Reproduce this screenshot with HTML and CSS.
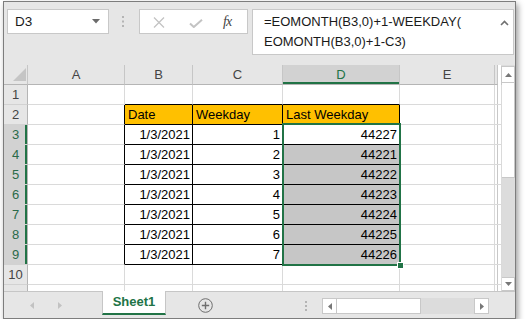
FILE: index.html
```html
<!DOCTYPE html>
<html>
<head>
<meta charset="utf-8">
<link rel="stylesheet" href="styles.css">
</head>
<body>
<div class="win">
  <div class="fbar">
    <div class="namebox">
      <span class="nb-text">D3</span>
      <svg class="nb-arrow" width="8" height="5" viewBox="0 0 8 5"><path d="M0 0H8L4 4.5Z" fill="#6b6b6b"/></svg>
    </div>
    <div class="sep">
      <svg width="3" height="11" viewBox="0 0 3 11"><rect x="0" y="0" width="2" height="2" fill="#b4b4b4"/><rect x="0" y="4.5" width="2" height="2" fill="#b4b4b4"/><rect x="0" y="9" width="2" height="2" fill="#b4b4b4"/></svg>
    </div>
    <div class="fbtns">
      <svg class="ic-x" width="12" height="11" viewBox="0 0 12 11"><path d="M1 0.5L11 10.5M11 0.5L1 10.5" stroke="#c3c3c3" stroke-width="1.3" fill="none"/></svg>
      <svg class="ic-ok" width="14" height="9" viewBox="0 0 14 9"><path d="M1 4.5L4.8 8L13 0.8" stroke="#c3c3c3" stroke-width="2" fill="none"/></svg>
      <span class="ic-fx">fx</span>
    </div>
    <div class="finput">
      <div class="ftext">=EOMONTH(B3,0)+1-WEEKDAY(<br>EOMONTH(B3,0)+1-C3)</div>
      <svg class="caret" width="9" height="6" viewBox="0 0 9 6"><path d="M1 5L4.5 1.5L8 5" stroke="#707070" stroke-width="1.6" fill="none"/></svg>
    </div>
  </div>

  <div class="main">
    <div class="sheet">
      <!-- header -->
      <div class="c h corner"><svg width="13" height="13" viewBox="0 0 13 13"><path d="M13 0V13H0Z" fill="#c5c5c5"/></svg></div>
      <div class="c h">A</div>
      <div class="c h">B</div>
      <div class="c h">C</div>
      <div class="c h hsel">D</div>
      <div class="c h">E</div>
      <div class="c h"></div>
      <!-- row 1 -->
      <div class="c rh">1</div>
      <div class="c"></div>
      <div class="c bb"></div>
      <div class="c bb"></div>
      <div class="c bb"></div>
      <div class="c"></div>
      <div class="c"></div>
      <!-- row 2 -->
      <div class="c rh">2</div>
      <div class="c br"></div>
      <div class="c tb y">Date</div>
      <div class="c tb y">Weekday</div>
      <div class="c tb y">Last Weekday</div>
      <div class="c"></div>
      <div class="c"></div>
      <!-- row 3 -->
      <div class="c rh rsel">3</div>
      <div class="c br"></div>
      <div class="c tb num">1/3/2021</div>
      <div class="c tb num">1</div>
      <div class="c tb num">44227</div>
      <div class="c"></div>
      <div class="c"></div>
      <!-- row 4 -->
      <div class="c rh rsel">4</div>
      <div class="c br"></div>
      <div class="c tb num">1/3/2021</div>
      <div class="c tb num">2</div>
      <div class="c tb num g">44221</div>
      <div class="c"></div>
      <div class="c"></div>
      <!-- row 5 -->
      <div class="c rh rsel">5</div>
      <div class="c br"></div>
      <div class="c tb num">1/3/2021</div>
      <div class="c tb num">3</div>
      <div class="c tb num g">44222</div>
      <div class="c"></div>
      <div class="c"></div>
      <!-- row 6 -->
      <div class="c rh rsel">6</div>
      <div class="c br"></div>
      <div class="c tb num">1/3/2021</div>
      <div class="c tb num">4</div>
      <div class="c tb num g">44223</div>
      <div class="c"></div>
      <div class="c"></div>
      <!-- row 7 -->
      <div class="c rh rsel">7</div>
      <div class="c br"></div>
      <div class="c tb num">1/3/2021</div>
      <div class="c tb num">5</div>
      <div class="c tb num g">44224</div>
      <div class="c"></div>
      <div class="c"></div>
      <!-- row 8 -->
      <div class="c rh rsel">8</div>
      <div class="c br"></div>
      <div class="c tb num">1/3/2021</div>
      <div class="c tb num">6</div>
      <div class="c tb num g">44225</div>
      <div class="c"></div>
      <div class="c"></div>
      <!-- row 9 -->
      <div class="c rh rsel">9</div>
      <div class="c br"></div>
      <div class="c tb num">1/3/2021</div>
      <div class="c tb num">7</div>
      <div class="c tb num g">44226</div>
      <div class="c"></div>
      <div class="c"></div>
      <!-- row 10 -->
      <div class="c rh">10</div>
      <div class="c"></div>
      <div class="c"></div>
      <div class="c"></div>
      <div class="c"></div>
      <div class="c"></div>
      <div class="c"></div>
      <!-- partial row 11 -->
      <div class="c rh last"></div>
      <div class="c last"></div>
      <div class="c last"></div>
      <div class="c last"></div>
      <div class="c last"></div>
      <div class="c last"></div>
      <div class="c last"></div>

      <div class="selection"><span class="handle"></span></div>
    </div>
    <div class="vscroll">
      <div class="sbtn up"><svg width="7" height="4" viewBox="0 0 7 4"><path d="M0 4H7L3.5 0Z" fill="#777"/></svg></div>
      <div class="vthumb"></div>
      <div class="vtrack"></div>
      <div class="sbtn down"><svg width="7" height="4" viewBox="0 0 7 4"><path d="M0 0H7L3.5 4Z" fill="#777"/></svg></div>
    </div>
  </div>

  <div class="tabs">
    <div class="nav">
      <svg class="nav-l" width="4" height="7" viewBox="0 0 4 7"><path d="M4 0V7L0 3.5Z" fill="#c2c2c2"/></svg>
      <svg class="nav-r" width="4" height="7" viewBox="0 0 4 7"><path d="M0 0V7L4 3.5Z" fill="#c2c2c2"/></svg>
    </div>
    <div class="tab">Sheet1</div>
    <div class="addsheet">
      <svg width="15" height="15" viewBox="0 0 15 15"><circle cx="7.5" cy="7.5" r="6.8" stroke="#6e6e6e" stroke-width="1" fill="none"/><path d="M7.5 3.8V11.2M3.8 7.5H11.2" stroke="#6e6e6e" stroke-width="1.4"/></svg>
    </div>
    <div class="hdots">
      <svg width="2" height="10" viewBox="0 0 2 10"><rect x="0" y="0" width="2" height="2" fill="#b4b4b4"/><rect x="0" y="4" width="2" height="2" fill="#b4b4b4"/><rect x="0" y="8" width="2" height="2" fill="#b4b4b4"/></svg>
    </div>
    <div class="hscroll">
      <div class="hbtn"><svg width="4" height="7" viewBox="0 0 4 7"><path d="M4 0V7L0 3.5Z" fill="#777"/></svg></div>
      <div class="hthumb"></div>
      <div class="htrack"></div>
      <div class="hbtn"><svg width="4" height="7" viewBox="0 0 4 7"><path d="M0 0V7L4 3.5Z" fill="#777"/></svg></div>
    </div>
  </div>
</div>
</body>
</html>
```

FILE: styles.css
```css
* { box-sizing: border-box; }

html, body {
  margin: 0;
  padding: 0;
  background: #ffffff;
}

body {
  font-family: "Liberation Sans", Arial, sans-serif;
  color: #000;
}

.win {
  margin: 1px 0 0 3px;
  width: 513px;
  height: 318px;
  border: 1px solid #7d7d7d;
  background: #e6e6e6;
  box-shadow: 2px 3px 6px rgba(0, 0, 0, 0.4);
  display: flex;
  flex-direction: column;
}

/* ---------- formula bar ---------- */
.fbar {
  height: 63px;
  display: flex;
  align-items: flex-start;
  padding-top: 7px;
}

.namebox {
  margin-left: 3px;
  width: 102px;
  height: 25px;
  background: #fff;
  border: 1px solid #c8c8c8;
  display: flex;
  align-items: center;
  justify-content: space-between;
  padding: 0 8px 0 7px;
}

.nb-text {
  font-size: 13.5px;
  color: #1a1a1a;
}

.sep {
  width: 30px;
  height: 25px;
  display: flex;
  align-items: center;
  justify-content: center;
  padding-right: 1px;
}

.fbtns {
  width: 109px;
  height: 25px;
  background: #fff;
  border: 1px solid #c8c8c8;
  display: flex;
  align-items: center;
  padding-left: 13px;
}

.ic-x { margin-top: 1px; }
.ic-ok { margin-left: 24px; margin-top: 3px; }

.ic-fx {
  margin-left: 20px;
  font-family: "Liberation Serif", "Times New Roman", serif;
  font-style: italic;
  font-size: 14px;
  color: #444;
  letter-spacing: -1px;
}

.finput {
  margin-left: 4px;
  margin-right: 1px;
  flex: 1;
  height: 46px;
  background: #fff;
  border: 1px solid #c8c8c8;
  display: flex;
  justify-content: space-between;
  padding: 2px 0 0 11px;
}

.ftext {
  font-size: 13px;
  line-height: 20px;
  color: #1a1a1a;
  white-space: nowrap;
}

.caret {
  margin: 8px 4px 0 0;
}

/* ---------- main sheet ---------- */
.main {
  height: 226px;
  display: flex;
  background: #fff;
}

.sheet {
  position: relative;
  display: grid;
  grid-template-columns: 24px 97px 68px 90px 117px 95px 3px;
  grid-template-rows: repeat(11, 20px) 6px;
  width: 494px;
  border-right: 1px solid #c8c8c8;
}

.c {
  border-right: 1px solid #dadada;
  border-bottom: 1px solid #dadada;
  font-size: 13px;
  line-height: 19px;
  padding: 0 3px;
  white-space: nowrap;
  overflow: hidden;
  color: #000;
}

.c.last { border-bottom: none; }

.h {
  background: #e6e6e6;
  text-align: center;
  color: #444;
  border-right-color: #c6c6c6;
  border-bottom-color: #b5b5b5;
  padding: 0;
}

.corner {
  display: flex;
  align-items: flex-end;
  justify-content: flex-end;
  padding: 0 1px 3px 0;
}

.hsel {
  background: #d2d2d2;
  color: #217346;
  box-shadow: inset 0 -2px 0 #217346;
}

.rh {
  background: #e6e6e6;
  text-align: center;
  color: #444;
  border-right-color: #b5b5b5;
  border-bottom-color: #d2d2d2;
  padding: 0;
}

.rsel {
  background: #d2d2d2;
  color: #2a6a49;
  box-shadow: inset -2px 0 0 #217346;
}

.bb { border-bottom-color: #000; }
.br { border-right-color: #000; }
.tb { border-right-color: #000; border-bottom-color: #000; }

.y { background: #ffc000; }
.g { background: #c6c6c6; }

.num {
  text-align: right;
  padding-right: 2px;
}

/* selection frame laid over the D3:D9 grid area */
.selection {
  position: absolute;
  grid-column: 5 / 6;
  grid-row: 4 / 11;
  top: -2px;
  left: -1px;
  right: -1px;
  bottom: -1px;
  border: 2px solid #217346;
  pointer-events: none;
}

.handle {
  position: absolute;
  right: -5px;
  bottom: -5px;
  width: 7px;
  height: 7px;
  background: #217346;
  border: 1px solid #fff;
}

/* ---------- vertical scrollbar ---------- */
.vscroll {
  margin-left: 3px;
  width: 14px;
  display: flex;
  flex-direction: column;
  background: #dcdcdc;
  padding-top: 1px;
}

.sbtn {
  background: #fff;
  border: 1px solid #c8c8c8;
  display: flex;
  align-items: center;
  justify-content: center;
}

.sbtn.up { height: 17px; }
.sbtn.down { height: 14px; }

.vthumb {
  height: 95px;
  background: #fff;
  border: 1px solid #c8c8c8;
  border-top: none;
}

.vtrack { flex: 1; }

/* ---------- sheet tabs ---------- */
.tabs {
  height: 27px;
  border-top: 1px solid #c6c6c6;
  display: flex;
  align-items: flex-start;
}

.nav {
  width: 98px;
  height: 26px;
  display: flex;
  align-items: center;
  padding-left: 26px;
}

.nav-r { margin-left: 24px; }

.tab {
  margin-top: -1px;
  width: 64px;
  height: 24px;
  background: #fff;
  border-left: 1px solid #c6c6c6;
  border-right: 1px solid #c6c6c6;
  border-bottom: 2px solid #217346;
  text-align: center;
  font-weight: bold;
  font-size: 13px;
  line-height: 22px;
  color: #217346;
}

.addsheet {
  width: 80px;
  height: 26px;
  display: flex;
  align-items: center;
  justify-content: center;
  padding-right: 1px;
  padding-top: 1px;
}

.hdots {
  margin-left: 59px;
  height: 26px;
  display: flex;
  align-items: center;
  padding-top: 1px;
}

.hscroll {
  margin-left: 15px;
  margin-top: 6px;
  width: 167px;
  height: 16px;
  display: flex;
  background: #dcdcdc;
}

.hbtn {
  width: 15px;
  background: #fff;
  border: 1px solid #c8c8c8;
  display: flex;
  align-items: center;
  justify-content: center;
}

.hthumb {
  width: 84px;
  background: #fff;
  border: 1px solid #c8c8c8;
  border-left: none;
}

.htrack { flex: 1; }
```
